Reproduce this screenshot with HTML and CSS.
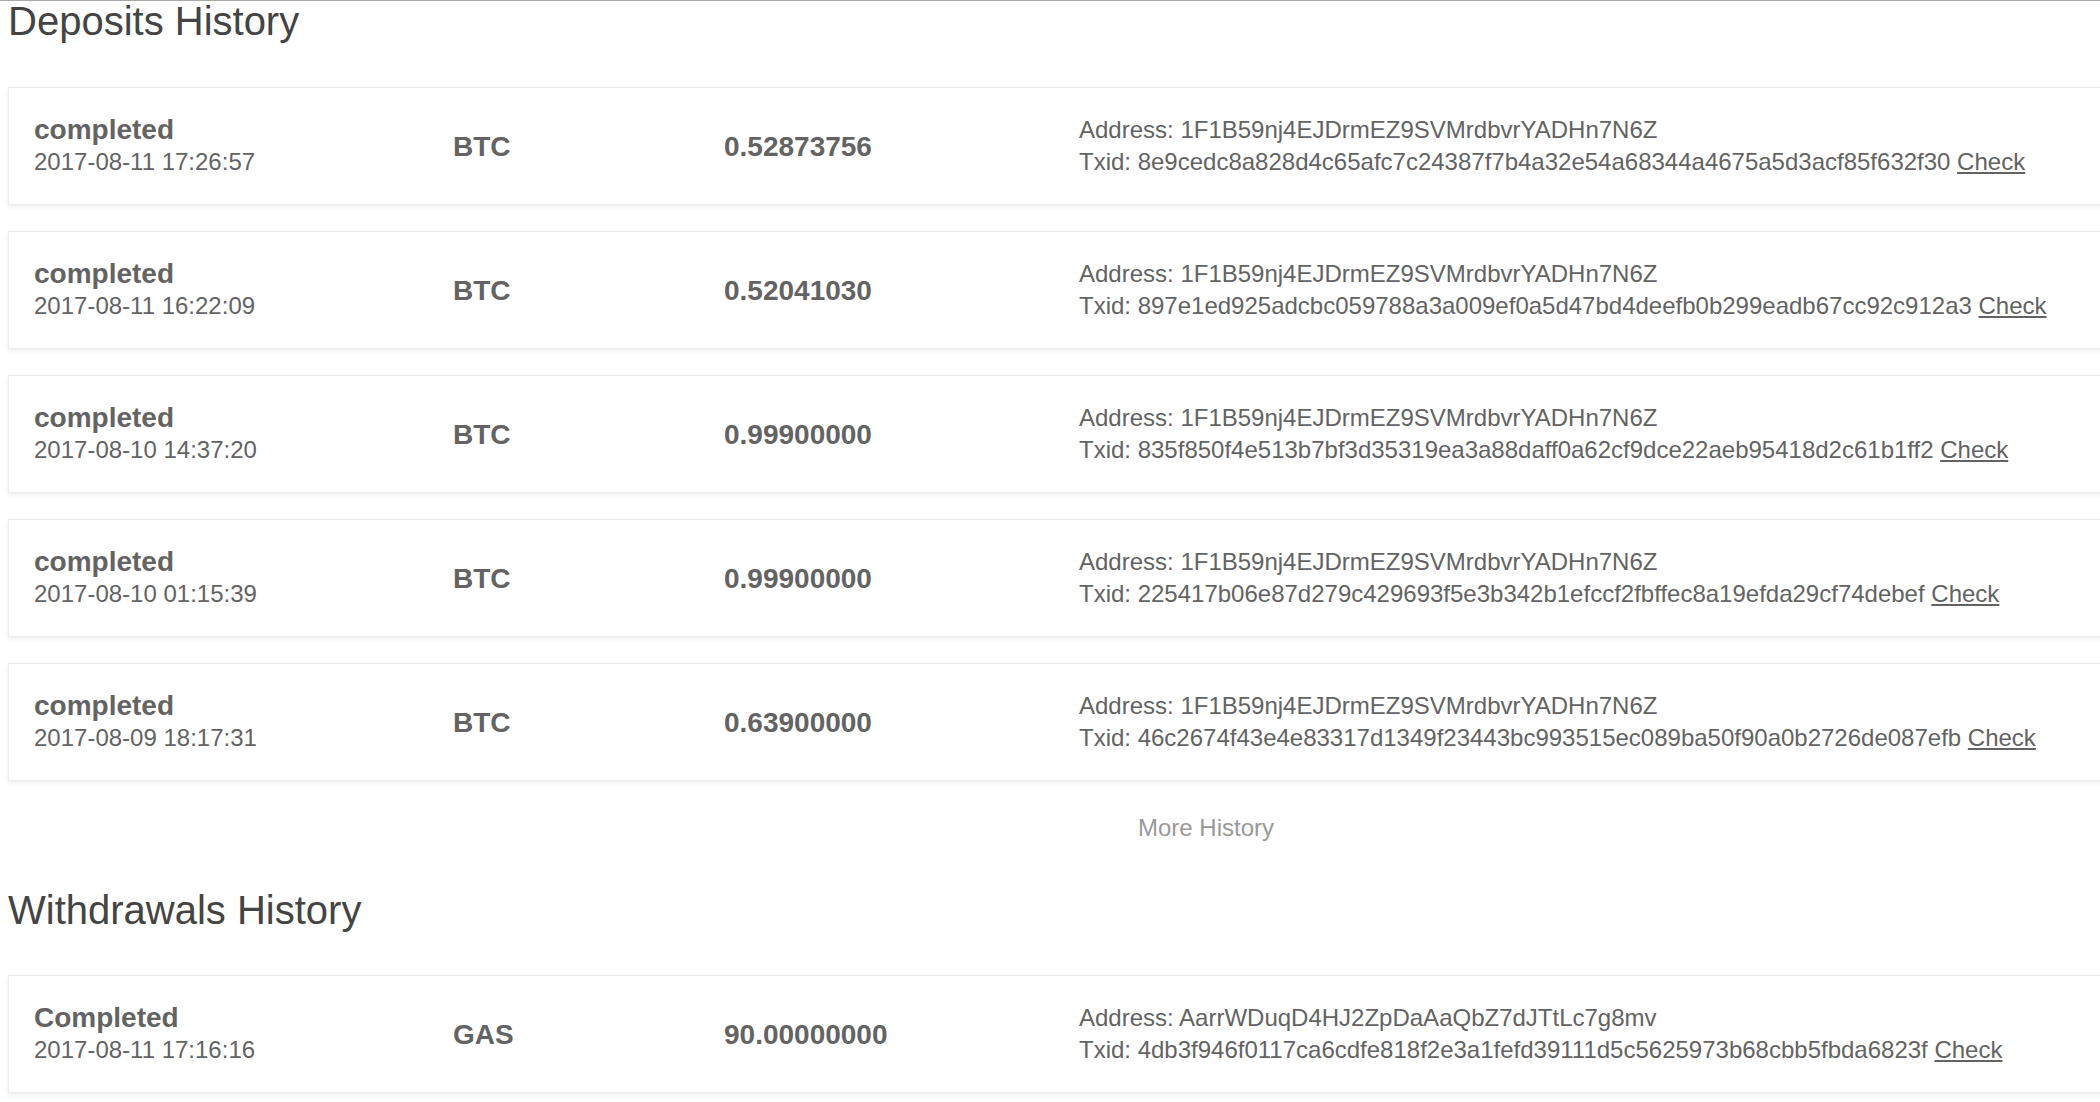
FILE: index.html
```html
<!DOCTYPE html>
<html>

<head>
  <meta charset="utf-8" />
  <title>History</title>
  <link rel="stylesheet" href="styles.css">
</head>

<body>
  <div id="page">
    <h3 class="section-title">Deposits History</h3>

    <div class="history-list">
      <div class="history-item">
        <div class="col status">
          <div class="state">completed</div>
          <div class="time">2017-08-11 17:26:57</div>
        </div>
        <div class="col coin">BTC</div>
        <div class="col amount">0.52873756</div>
        <div class="col info">
          <div>Address: 1F1B59nj4EJDrmEZ9SVMrdbvrYADHn7N6Z</div>
          <div>Txid: 8e9cedc8a828d4c65afc7c24387f7b4a32e54a68344a4675a5d3acf85f632f30 <a href="#">Check</a></div>
        </div>
      </div>

      <div class="history-item">
        <div class="col status">
          <div class="state">completed</div>
          <div class="time">2017-08-11 16:22:09</div>
        </div>
        <div class="col coin">BTC</div>
        <div class="col amount">0.52041030</div>
        <div class="col info">
          <div>Address: 1F1B59nj4EJDrmEZ9SVMrdbvrYADHn7N6Z</div>
          <div>Txid: 897e1ed925adcbc059788a3a009ef0a5d47bd4deefb0b299eadb67cc92c912a3 <a href="#">Check</a></div>
        </div>
      </div>

      <div class="history-item">
        <div class="col status">
          <div class="state">completed</div>
          <div class="time">2017-08-10 14:37:20</div>
        </div>
        <div class="col coin">BTC</div>
        <div class="col amount">0.99900000</div>
        <div class="col info">
          <div>Address: 1F1B59nj4EJDrmEZ9SVMrdbvrYADHn7N6Z</div>
          <div>Txid: 835f850f4e513b7bf3d35319ea3a88daff0a62cf9dce22aeb95418d2c61b1ff2 <a href="#">Check</a></div>
        </div>
      </div>

      <div class="history-item">
        <div class="col status">
          <div class="state">completed</div>
          <div class="time">2017-08-10 01:15:39</div>
        </div>
        <div class="col coin">BTC</div>
        <div class="col amount">0.99900000</div>
        <div class="col info">
          <div>Address: 1F1B59nj4EJDrmEZ9SVMrdbvrYADHn7N6Z</div>
          <div>Txid: 225417b06e87d279c429693f5e3b342b1efccf2fbffec8a19efda29cf74debef <a href="#">Check</a></div>
        </div>
      </div>

      <div class="history-item">
        <div class="col status">
          <div class="state">completed</div>
          <div class="time">2017-08-09 18:17:31</div>
        </div>
        <div class="col coin">BTC</div>
        <div class="col amount">0.63900000</div>
        <div class="col info">
          <div>Address: 1F1B59nj4EJDrmEZ9SVMrdbvrYADHn7N6Z</div>
          <div>Txid: 46c2674f43e4e83317d1349f23443bc993515ec089ba50f90a0b2726de087efb <a href="#">Check</a></div>
        </div>
      </div>
    </div>

    <div class="more"><a href="#">More History</a></div>

    <h3 class="section-title">Withdrawals History</h3>

    <div class="history-list withdrawals">
      <div class="history-item">
        <div class="col status">
          <div class="state">Completed</div>
          <div class="time">2017-08-11 17:16:16</div>
        </div>
        <div class="col coin">GAS</div>
        <div class="col amount">90.00000000</div>
        <div class="col info">
          <div>Address: AarrWDuqD4HJ2ZpDaAaQbZ7dJTtLc7g8mv</div>
          <div>Txid: 4db3f946f0117ca6cdfe818f2e3a1fefd39111d5c5625973b68cbb5fbda6823f <a href="#">Check</a></div>
        </div>
      </div>
    </div>
  </div>
</body>

</html>
```

FILE: styles.css
```css
html {
  overflow: hidden;
}

body {
  margin: 0px;
  padding: 0px;
  border-top: 1px solid #a9a9a9;
  font-family: "Liberation Sans", Arial, sans-serif;
  color: #636363;
  background-color: white;
}

#page {
  width: 2396px;
  padding: 0px 8px;
}

.section-title {
  margin: 0px;
  font-size: 40px;
  line-height: 40px;
  font-weight: normal;
  color: #444444;
}

.history-list {
  margin-top: 46px;
}

.history-list.withdrawals {
  margin-top: 45px;
}

.history-item {
  display: flex;
  align-items: center;
  height: 118px;
  box-sizing: border-box;
  padding: 0px 25px;
  margin-bottom: 26px;
  border: 1px solid #ececec;
  box-shadow: 0px 2px 4px rgba(0, 0, 0, 0.07);
  background-color: white;
}

.col {
  font-size: 24px;
  line-height: 32px;
}

.status {
  width: 419px;
  margin-top: -1px;
}

.state {
  font-size: 28px;
  font-weight: bold;
}

.coin {
  width: 271px;
  font-size: 28px;
  font-weight: bold;
  margin-top: 1px;
}

.amount {
  width: 355px;
  font-size: 28px;
  font-weight: bold;
  margin-top: 1px;
}

.info {
  flex: 1;
  white-space: nowrap;
  margin-top: -1px;
}

.info a {
  color: #636363;
  text-decoration: underline;
}

.more {
  text-align: center;
  font-size: 24px;
  line-height: 32px;
  padding: 5px 0px;
  margin-bottom: 41px;
}

.more a {
  color: #999999;
  text-decoration: none;
}
```
